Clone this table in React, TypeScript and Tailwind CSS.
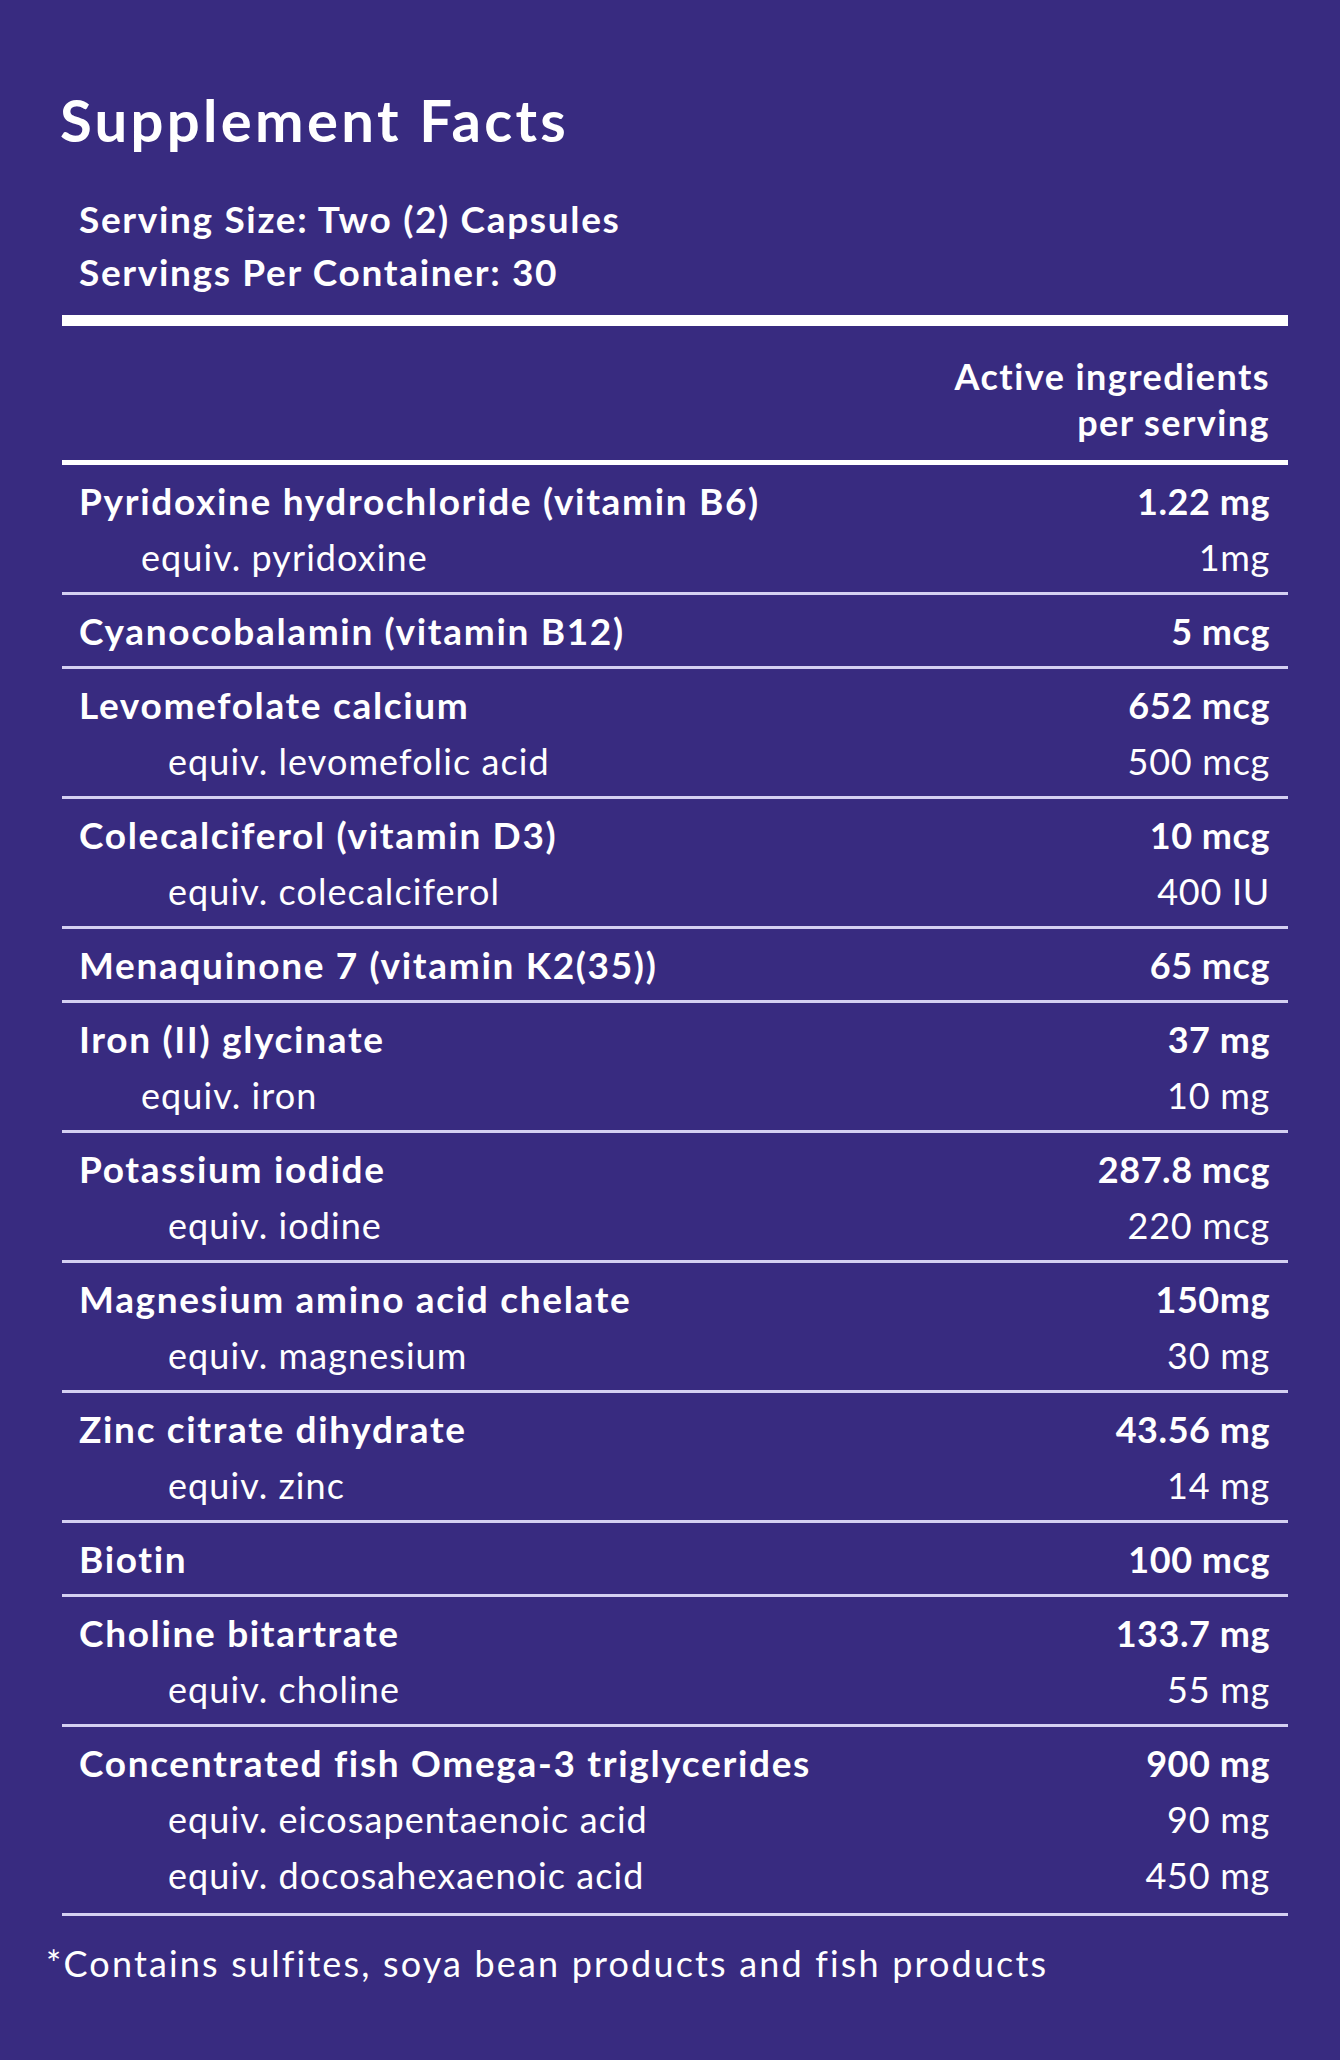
import React from 'react';

type Sub = { label: string; value: string };
type Row = { name: string; value: string; subs?: Sub[]; shortIndent?: boolean };

const rows: Row[] = [
  {
    name: 'Pyridoxine hydrochloride (vitamin B6)',
    value: '1.22 mg',
    subs: [{ label: 'equiv. pyridoxine', value: '1mg' }],
    shortIndent: true,
  },
  { name: 'Cyanocobalamin (vitamin B12)', value: '5 mcg' },
  {
    name: 'Levomefolate calcium',
    value: '652 mcg',
    subs: [{ label: 'equiv. levomefolic acid', value: '500 mcg' }],
  },
  {
    name: 'Colecalciferol (vitamin D3)',
    value: '10 mcg',
    subs: [{ label: 'equiv. colecalciferol', value: '400 IU' }],
  },
  { name: 'Menaquinone 7 (vitamin K2(35))', value: '65 mcg' },
  {
    name: 'Iron (II) glycinate',
    value: '37 mg',
    subs: [{ label: 'equiv. iron', value: '10 mg' }],
    shortIndent: true,
  },
  {
    name: 'Potassium iodide',
    value: '287.8 mcg',
    subs: [{ label: 'equiv. iodine', value: '220 mcg' }],
  },
  {
    name: 'Magnesium amino acid chelate',
    value: '150mg',
    subs: [{ label: 'equiv. magnesium', value: '30 mg' }],
  },
  {
    name: 'Zinc citrate dihydrate',
    value: '43.56 mg',
    subs: [{ label: 'equiv. zinc', value: '14 mg' }],
  },
  { name: 'Biotin', value: '100 mcg' },
  {
    name: 'Choline bitartrate',
    value: '133.7 mg',
    subs: [{ label: 'equiv. choline', value: '55 mg' }],
  },
  {
    name: 'Concentrated fish Omega-3 triglycerides',
    value: '900 mg',
    subs: [
      { label: 'equiv. eicosapentaenoic acid', value: '90 mg' },
      { label: 'equiv. docosahexaenoic acid', value: '450 mg' },
    ],
  },
];

const IngredientRow = ({ row }: { row: Row }) => {
  const tall = (row.subs?.length ?? 0) > 1;
  return (
    <div
      className={`border-b-[3px] border-[#d4d0f2] pt-[8px] pl-[17px] pr-[18px] ${
        tall ? 'pb-[10px]' : 'pb-[7px]'
      }`}
    >
      <div className="flex justify-between leading-[56px] font-bold">
        <span className="text-[37px] tracking-[0.045em]">{row.name}</span>
        <span className="tracking-[0.015em]">{row.value}</span>
      </div>
      {row.subs?.map((sub) => (
        <div key={sub.label} className="flex justify-between leading-[56px] tracking-[0.03em]">
          <span className={row.shortIndent ? 'pl-[62px]' : 'pl-[89px]'}>{sub.label}</span>
          <span className="tracking-[0.02em]">{sub.value}</span>
        </div>
      ))}
    </div>
  );
};

export default function App() {
  return (
    <div className="min-h-[2060px] w-full bg-[#382b80] text-white font-['Lato','Noto_Sans',sans-serif] text-[36px] pl-[46px] pr-[52px] pt-[89px]">
      <h1 className="pl-[14px] text-[58px] leading-[62px] font-bold tracking-[0.057em]">Supplement Facts</h1>

      <div className="mt-[41px] pl-[33px] font-bold text-[37px] leading-[53px] tracking-[0.045em]">
        <div>Serving Size: Two (2) Capsules</div>
        <div>Servings Per Container: 30</div>
      </div>

      <div className="ml-[16px] mt-[17px] border-t-[11px] border-white">
        <div className="border-b-[5px] border-white pt-[27px] pb-[15px] pr-[18px] text-right font-bold leading-[46px] tracking-[0.04em]">
          <div>Active ingredients</div>
          <div>per serving</div>
        </div>

        {rows.map((row) => (
          <IngredientRow key={row.name} row={row} />
        ))}
      </div>

      <p className="mt-[20px] leading-[54px] tracking-[0.06em]">
        *Contains sulfites, soya bean products and fish products
      </p>
    </div>
  );
}
